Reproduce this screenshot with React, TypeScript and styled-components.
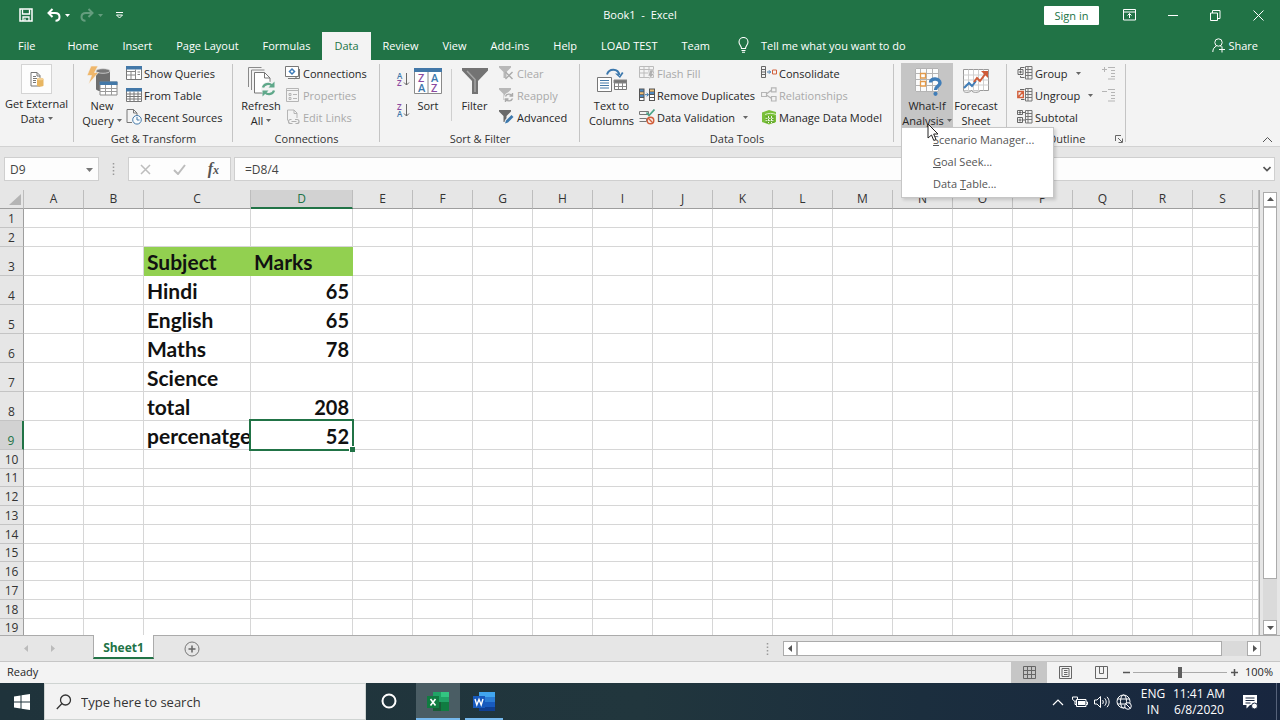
import React, { useState } from "react";
import styled, { createGlobalStyle, css } from "styled-components";

const GREEN = "#217346";
const UI_FONT = '"Open Sans", "Noto Sans", sans-serif';

const GlobalStyle = createGlobalStyle`
  * { box-sizing: border-box; }
  body { margin: 0; background: #e6e6e6; font-family: ${UI_FONT}; font-size: 11px; color: #262626; }
  button, input { font: inherit; color: inherit; }
  button { border: 0; padding: 0; background: none; white-space: nowrap; }
`;

const Window = styled.div`
  display: flex;
  flex-direction: column;
  height: 100vh;
  overflow: hidden;
`;

/* ---------- title bar ---------- */

const TitleBar = styled.header`
  display: grid;
  grid-template-columns: 1fr auto 1fr;
  align-items: center;
  flex: none;
  height: 30px;
  background: ${GREEN};
  color: #fff;
`;

const QuickAccess = styled.div`
  display: flex;
  align-items: center;
  padding-left: 19px;
`;

const QuickButton = styled.button<{ $gap?: number; $dim?: boolean }>`
  display: flex;
  margin-right: ${(p) => p.$gap ?? 0}px;
  opacity: ${(p) => (p.$dim ? 0.3 : 1)};
`;

const Title = styled.h1`
  margin: 0;
  padding-bottom: 2px;
  font-size: 11px;
  font-weight: 400;
  white-space: pre;
`;

const WindowControls = styled.div`
  display: flex;
  justify-content: flex-end;
  align-items: center;
  height: 28px;
`;

const SignIn = styled.button`
  width: 55px;
  height: 19px;
  margin-right: 9px;
  background: #fff;
  color: ${GREEN};
  border-radius: 1px;
`;

const ControlButton = styled.button`
  display: flex;
  align-items: center;
  justify-content: center;
  width: 43px;
  height: 28px;
`;

/* ---------- ribbon tabs ---------- */

const TabBar = styled.nav`
  display: flex;
  flex: none;
  height: 30px;
  padding: 2px 22px 0 6px;
  background: ${GREEN};
  color: #fff;
`;

const RibbonTab = styled.button<{ $active?: boolean; $wide?: boolean }>`
  padding: 0 12px 2px;
  margin-right: ${(p) => (p.$wide ? 8 : 0)}px;
  ${(p) => p.$active && css`
    background: #f3f3f3;
    color: ${GREEN};
  `}
`;

const TellMe = styled.button`
  display: flex;
  align-items: center;
  gap: 12px;
  margin-left: 16px;
  padding-bottom: 2px;
`;

const Share = styled.button`
  display: flex;
  align-items: center;
  gap: 2px;
  margin-left: auto;
  padding-bottom: 2px;
`;

/* ---------- ribbon ---------- */

const Ribbon = styled.section`
  display: flex;
  flex: none;
  height: 87px;
  background: #f3f3f3;
  border-bottom: 1px solid #d2d2d2;
`;

const GroupBox = styled.div<{ $width: number }>`
  position: relative;
  display: flex;
  flex-direction: column;
  flex: none;
  width: ${(p) => p.$width}px;
  padding-top: 3px;
  &::after {
    content: "";
    position: absolute;
    right: 0;
    top: 4px;
    bottom: 4px;
    width: 1px;
    background: #c4c4c4;
  }
`;

const GroupBody = styled.div<{ $indent?: number }>`
  display: flex;
  align-items: flex-start;
  height: 68px;
  padding-left: ${(p) => p.$indent ?? 6}px;
`;

const GroupLabel = styled.div`
  display: flex;
  align-items: center;
  justify-content: center;
  height: 15px;
  color: #333;
`;

const Launcher = styled.button`
  position: absolute;
  right: 3px;
  bottom: 3px;
  display: flex;
`;

const BigButton = styled.button<{ $width: number; $pressed?: boolean }>`
  display: flex;
  flex-direction: column;
  align-items: center;
  width: ${(p) => p.$width}px;
  line-height: 15px;
  text-align: center;
  ${(p) => p.$pressed && css`
    background: #c5c5c5;
  `}
`;

const BigIcon = styled.span`
  display: flex;
  align-items: center;
  justify-content: center;
  height: 35px;
`;

const BoxedIcon = styled.span`
  display: flex;
  align-items: center;
  justify-content: center;
  width: 31px;
  height: 30px;
  margin: 1px 0 2px;
  background: #fdfdfd;
  border: 1px solid #d4d4d4;
`;

const LabelLine = styled.span`
  display: flex;
  align-items: center;
  gap: 3px;
`;

const SmallColumn = styled.div<{ $width?: number; $gap?: number }>`
  display: flex;
  flex-direction: column;
  align-items: flex-start;
  width: ${(p) => (p.$width ? `${p.$width}px` : "auto")};
  margin-left: ${(p) => p.$gap ?? 2}px;
`;

const SmallButton = styled.button`
  display: flex;
  align-items: center;
  gap: 2px;
  height: 22px;
  padding-bottom: 2px;
  &:disabled { color: #a9a9a9; }
`;

const CaretSpace = styled.span`
  display: flex;
  margin-left: 6px;
`;

const SortColumn = styled.div`
  display: flex;
  flex-direction: column;
  gap: 10px;
  width: 23px;
  padding-top: 8px;
`;

const InnerDivider = styled.span`
  width: 1px;
  height: 52px;
  margin: 6px 0 0 2px;
  background: #cfcfcf;
`;

const MenuAnchor = styled.div`
  position: relative;
`;

const Menu = styled.div`
  position: absolute;
  z-index: 5;
  top: 64px;
  left: 0;
  width: 153px;
  padding-bottom: 3px;
  background: #fff;
  border: 1px solid #c6c6c6;
  box-shadow: 2px 2px 3px rgba(0, 0, 0, 0.15);
`;

const MenuItem = styled.button`
  display: block;
  width: 100%;
  height: 22px;
  padding-left: 31px;
  text-align: left;
  color: #555;
`;

const Pointer = styled.svg`
  position: absolute;
  z-index: 6;
  top: 60px;
  left: 26px;
  pointer-events: none;
`;

const CollapseButton = styled.button`
  display: flex;
  align-self: flex-end;
  margin: 0 7px 3px auto;
`;

/* ---------- formula bar ---------- */

const FormulaBar = styled.div`
  display: flex;
  flex: none;
  height: 43px;
  padding: 10px 5px 9px 4px;
  background: #e6e6e6;
`;

const fieldBox = css`
  display: flex;
  align-items: center;
  background: #fdfdfd;
  border: 1px solid #cfcfcf;
`;

const NameBox = styled.div`
  ${fieldBox}
  width: 95px;
  padding-right: 5px;
  input { width: 80px; flex: 1; border: 0; outline: 0; padding: 0 5px; background: none; font-size: 12px; color: #444; }
`;

const Grip = styled.span`
  display: flex;
  align-items: center;
  justify-content: center;
  width: 29px;
`;

const EditButtons = styled.div`
  ${fieldBox}
  justify-content: space-between;
  width: 103px;
  padding: 0 11px;
  margin-right: 3px;
  button { display: flex; }
`;

const FxLabel = styled.span`
  font-family: "Liberation Serif", serif;
  font-size: 16px;
  font-style: italic;
  font-weight: 700;
  line-height: 16px;
  color: #555;
  sub { font-size: 12px; line-height: 0; vertical-align: baseline; }
`;

const FormulaField = styled.div`
  ${fieldBox}
  flex: 1;
  padding-right: 3px;
  input { flex: 1; border: 0; outline: 0; padding: 0 10px; background: none; font-size: 12px; color: #444; }
`;

/* ---------- sheet ---------- */

const SheetArea = styled.main`
  display: flex;
  flex: 1;
  min-height: 0;
  background: #e6e6e6;
`;

const SheetView = styled.div`
  flex: 1;
  min-width: 0;
  overflow: hidden;
  border-right: 1px solid #ababab;
`;

const SheetTable = styled.table`
  width: 100%;
  table-layout: fixed;
  border-collapse: separate;
  border-spacing: 0;
`;

const ColumnHead = styled.th<{ $selected?: boolean }>`
  height: 19px;
  padding: 0;
  font-size: 12px;
  font-weight: 400;
  line-height: 16px;
  color: ${(p) => (p.$selected ? GREEN : "#333")};
  background: ${(p) => (p.$selected ? "#d2d2d2" : "#e6e6e6")};
  border-right: 1px solid #bdbdbd;
  border-bottom: ${(p) => (p.$selected ? `2px solid ${GREEN}` : "1px solid #9e9e9e")};
`;

const CornerCell = styled.td`
  padding: 0 2px 0 0;
  border-right: 1px solid #bdbdbd;
  border-bottom: 1px solid #9e9e9e;
  vertical-align: bottom;
  text-align: right;
  svg { display: block; margin: 0 0 3px auto; }
`;

const RowHead = styled.th<{ $height: number; $selected?: boolean }>`
  height: ${(p) => p.$height}px;
  padding: 0;
  font-size: 12px;
  font-weight: 400;
  line-height: 17px;
  vertical-align: bottom;
  text-align: center;
  color: ${(p) => (p.$selected ? GREEN : "#333")};
  background: ${(p) => (p.$selected ? "#d2d2d2" : "#e6e6e6")};
  border-right: ${(p) => (p.$selected ? `2px solid ${GREEN}` : "1px solid #9e9e9e")};
  border-bottom: 1px solid #c4c4c4;
`;

const Cell = styled.td<{ $fill?: boolean; $number?: boolean; $selected?: boolean }>`
  position: relative;
  padding: 1px 3px 0;
  overflow: ${(p) => (p.$selected ? "visible" : "hidden")};
  font-family: Lato, "Open Sans", sans-serif;
  font-size: ${(p) => (p.$number ? 20 : 21)}px;
  font-weight: 700;
  line-height: 16px;
  white-space: nowrap;
  color: #111;
  text-align: ${(p) => (p.$number ? "right" : "left")};
  background: ${(p) => (p.$fill ? "#92d050" : "#fff")};
  border-right: 1px solid ${(p) => (p.$fill ? "#92d050" : "#d6d6d6")};
  border-bottom: 1px solid ${(p) => (p.$fill ? "#92d050" : "#d6d6d6")};
`;

const SelectionFrame = styled.span`
  position: absolute;
  z-index: 2;
  inset: -2px;
  border: 2px solid ${GREEN};
  &::after {
    content: "";
    position: absolute;
    right: -3px;
    bottom: -3px;
    width: 5px;
    height: 5px;
    background: ${GREEN};
    box-shadow: -1px -1px 0 #fff;
  }
`;

const ScrollTrack = styled.div<{ $vertical?: boolean }>`
  display: flex;
  flex-direction: ${(p) => (p.$vertical ? "column" : "row")};
  ${(p) => p.$vertical
    ? css`width: 14px; margin: 2px 3px 0 3px;`
    : css`width: 478px; height: 15px; background: #dadada;`}
`;

const ScrollButton = styled.button`
  display: flex;
  align-items: center;
  justify-content: center;
  flex: none;
  width: 14px;
  height: 15px;
  background: #fff;
  border: 1px solid #ababab;
`;

const ScrollThumb = styled.div<{ $share: number }>`
  flex: 0 0 ${(p) => p.$share}%;
  background: #fff;
  border: 1px solid #ababab;
`;

const ScrollRest = styled.div`
  flex: 1;
  background: #dadada;
`;

/* ---------- sheet tabs and status ---------- */

const SheetTabs = styled.div`
  display: flex;
  flex: none;
  height: 27px;
  padding-right: 19px;
  background: #e6e6e6;
  border-top: 1px solid #ababab;
  border-bottom: 1px solid #c6c6c6;
`;

const TabArrows = styled.div`
  display: flex;
  align-items: center;
  gap: 19px;
  width: 93px;
  padding-left: 23px;
  button { display: flex; }
`;

const SheetTab = styled.button`
  width: 61px;
  height: 24px;
  margin-top: -1px;
  padding-top: 2px;
  background: #fff;
  border: 1px solid #ababab;
  border-top: 0;
  border-bottom: 2px solid ${GREEN};
  color: ${GREEN};
  font-size: 12px;
  font-weight: 700;
`;

const AddSheet = styled.button`
  display: flex;
  align-items: center;
  margin-left: 30px;
`;

const HorizontalScroll = styled.div`
  display: flex;
  align-items: center;
  gap: 14px;
  margin-left: auto;
`;

const StatusBar = styled.footer`
  display: flex;
  align-items: center;
  flex: none;
  height: 21px;
  padding: 0 7px;
  background: #f3f3f3;
`;

const StatusText = styled.span`
  padding-bottom: 2px;
`;

const StatusTools = styled.div`
  display: flex;
  align-items: center;
  height: 21px;
  margin-left: auto;
`;

const ViewButton = styled.button<{ $active?: boolean }>`
  display: flex;
  align-items: center;
  justify-content: center;
  width: 36px;
  height: 21px;
  background: ${(p) => (p.$active ? "#c6c6c6" : "none")};
`;

const ZoomStep = styled.button`
  width: 14px;
  display: flex;
  justify-content: center;
`;

const ZoomSlider = styled.input`
  appearance: none;
  width: 94px;
  height: 14px;
  margin: 0;
  background: linear-gradient(#aaa, #aaa) center / 100% 1px no-repeat;
  &::-webkit-slider-thumb { appearance: none; width: 4px; height: 11px; background: #5f5f5f; }
`;

const ZoomValue = styled.span`
  width: 32px;
  padding-bottom: 2px;
  text-align: right;
`;

/* ---------- taskbar ---------- */

const Taskbar = styled.div`
  display: flex;
  flex: none;
  height: 37px;
  color: #fff;
  background: linear-gradient(90deg, #1f333b 0%, #21363d 50%, #1b2e3e 72%, #18263f 100%);
`;

const StartButton = styled.button`
  display: flex;
  align-items: center;
  justify-content: center;
  width: 44px;
`;

const SearchBox = styled.label`
  display: flex;
  align-items: center;
  gap: 9px;
  width: 322px;
  padding-left: 11px;
  background: #f2f2f2;
  border: 1px solid #cfd4d2;
  input { flex: 1; min-width: 0; border: 0; outline: 0; padding: 0; background: none; font-size: 13px; }
  input::placeholder { color: #333; opacity: 1; }
`;

const TaskButton = styled.button<{ $running?: boolean; $active?: boolean }>`
  display: flex;
  align-items: center;
  justify-content: center;
  width: ${(p) => (p.$running && !p.$active ? 38 : 44)}px;
  margin-left: ${(p) => (p.$active || p.$running ? 5 : 1)}px;
  padding-top: ${(p) => (p.$running ? 2 : 0)}px;
  border-bottom: 2px solid ${(p) => (p.$running ? "#76b9ed" : "transparent")};
  background: ${(p) => (p.$active ? "#4a5d64" : "none")};
  background-clip: padding-box;
`;

const Tray = styled.div`
  display: flex;
  align-items: center;
  margin-left: auto;
  padding-right: 3px;
`;

const TrayButton = styled.button`
  display: flex;
  align-items: center;
  justify-content: center;
  width: 22px;
`;

const TrayText = styled.div<{ $width: number }>`
  width: ${(p) => p.$width}px;
  font-size: 12px;
  line-height: 16px;
  text-align: center;
`;

const Notifications = styled.button`
  display: flex;
  align-items: center;
  justify-content: center;
  width: 46px;
`;

const DesktopEdge = styled.span`
  width: 1px;
  height: 37px;
  margin-left: 3px;
  background: #56627a;
`;

/* ---------- icons ---------- */

type IconProps = { w?: number; h?: number; children: React.ReactNode };
const Icon = ({ w = 16, h = 16, children }: IconProps) => (
  <svg width={w} height={h} viewBox={`0 0 ${w} ${h}`} fill="none" aria-hidden="true">{children}</svg>
);

const Caret = ({ color = "#666" }: { color?: string }) => (
  <Icon w={5} h={3}><path d="M0 0h5L2.5 3z" fill={color} /></Icon>
);

const SaveIcon = () => (
  <Icon w={14} h={14}>
    <path d="M1 1h12v12H1z" stroke="#fff" strokeWidth="1.5" />
    <path d="M3.500 1.500V6h7V1.500M4 13V9h6v4M6 10.500v2" stroke="#fff" strokeWidth="1.300" />
  </Icon>
);
const UndoIcon = ({ flip }: { flip?: boolean }) => (
  <Icon w={14} h={14}>
    <g transform={flip ? "matrix(-1 0 0 1 14 0)" : undefined} stroke="#fff" strokeWidth="2">
      <path d="M5.500 1 1.500 5l4 4M2 5h6c3 0 4.500 1.500 4.500 4S11 12.800 8.500 12.800" />
    </g>
  </Icon>
);
const CustomizeIcon = () => (
  <Icon w={9} h={9}><path d="M1 1.500h7" stroke="#fff" /><path d="M1.500 4 4.500 7 7.500 4z" stroke="#fff" /></Icon>
);
const RibbonOptionsIcon = () => (
  <Icon w={13} h={12}>
    <path d="M.5.5h12v10.500H.5zM.5 3h12M6.500 9V4.500M4.500 6.500l2-2 2 2" stroke="#fff" />
  </Icon>
);
const MinimizeIcon = () => <Icon w={10} h={10}><path d="M0 5.500h10" stroke="#fff" /></Icon>;
const RestoreIcon = () => (
  <Icon w={11} h={11}><path d="M.5 3h7v7.500h-7zM2.500 3V.5h7.500v8H7.500" stroke="#fff" /></Icon>
);
const CloseIcon = () => <Icon w={11} h={11}><path d="m.5.5 10 10M10.500.5l-10 10" stroke="#fff" /></Icon>;
const BulbIcon = () => (
  <Icon w={11} h={16}>
    <path d="M3.500 11.500C3.500 9 1 8 1 5a4.500 4.500 0 0 1 9 0c0 3-2.500 4-2.500 6.500zM3.500 13.500h4M4 15.300h3" stroke="#fff" strokeWidth="1.100" />
  </Icon>
);
const PersonIcon = () => (
  <Icon w={14} h={15}>
    <circle cx="6.500" cy="4.500" r="3.700" stroke="#fff" />
    <path d="M.8 14c0-3 1.500-5 3.700-6M8.500 8l1 1M10 8.500v6M7 11.500h6" stroke="#fff" />
  </Icon>
);

const ExternalDataIcon = () => (
  <Icon w={14} h={15}>
    <path d="M1 .5h6l3 3V14H1z" fill="#fff" stroke="#777" />
    <path d="M7 .5v3.500h3M3 4.500h3M3 6.500h4M3 8.500h3M3 10.500h3" stroke="#777" />
    <path d="M7 7v6.500c0 1.500 6.500 1.500 6.500 0V7z" fill="#e8b662" />
    <ellipse cx="10.200" cy="7" rx="3.300" ry="1.300" fill="#f3cf92" />
  </Icon>
);
const NewQueryIcon = () => (
  <Icon w={32} h={32}>
    <path d="M10 6v18c0 3 14 3 14 0V6z" fill="#6e6e6e" />
    <ellipse cx="17" cy="6" rx="7" ry="2.300" fill="#777" stroke="#d8d8d8" strokeWidth=".8" />
    <path d="M5 1h7L8.500 7.500h4L2.500 19l3-8.500H1z" fill="#efb76b" stroke="#f3f3f3" strokeWidth=".6" />
    <path d="M14 17h17v13H14z" fill="#fff" stroke="#8a8a8a" />
    <path d="M13.500 16.500h18v3.500h-18z" fill="#4378a8" />
    <path d="M14 23.500h17M14 26.500h17M19.500 20V30M25.500 20V30" stroke="#9a9a9a" />
  </Icon>
);
const TableIcon = ({ panes }: { panes?: boolean }) => (
  <Icon w={16} h={14}>
    <path d="M.5.5h15v13H.5z" fill="#fff" stroke="#777" />
    <path d="M0 0h16v3.500H0z" fill="#4378a8" />
    {panes ? (
      <path d="M1 5.500h8M9.500 3.500V13M1 9h8M5 6v7M11.500 6h2.500M11.500 8.500h2.500" stroke="#888" />
    ) : (
      <path d="M1 6h14M1 8.500h14M1 11h14M4 3.500V13M8 3.500V13M12 3.500V13" stroke="#777" />
    )}
  </Icon>
);
const RecentIcon = () => (
  <Icon>
    <path d="M1 .5h6.500L11 4v2M1 .5v13h5M7.500.5V4H11" stroke="#777" />
    <circle cx="11" cy="10.800" r="4.300" fill="#f8fbfd" stroke="#4378a8" />
    <path d="M11 8v3h2.500" stroke="#4378a8" />
  </Icon>
);
const RefreshIcon = () => (
  <Icon w={30} h={32}>
    <path d="M2.500 22V2.500h13M5.500 25V5h13" stroke="#8a8a8a" />
    <path d="M8.500 7.500h10l5.500 5.500V28H8.500z" fill="#fff" stroke="#777" />
    <path d="M18.500 7.500V13H24" stroke="#777" />
    <circle cx="22.500" cy="24" r="7.500" fill="#f3f3f3" />
    <path d="M17 22.500c1-3.500 6-5 9-2M28 25.500c-1 3.500-6 5-9 2" stroke="#5fa88a" strokeWidth="2.300" />
    <path d="M28.500 16.500v6h-6zM16.500 31.500v-6h6z" fill="#5fa88a" />
  </Icon>
);
const ConnectionsIcon = () => (
  <Icon w={16} h={14}>
    <path d="M.5.500h13V10.500H.5z" fill="#fff" stroke="#777" />
    <path d="M3 12.500h11.500V3M9 13l4-3" stroke="#777" />
    <path d="m7 3 2.500 2.500L7 8 4.500 5.500z" stroke="#3c7ab8" strokeWidth="1.500" />
  </Icon>
);
const PropertiesIcon = () => (
  <Icon w={16} h={14}>
    <path d="M1.500.5h12v13h-12zM1.500 2.500h12M4 5.500h2v2H4zM4 9.500h2v2H4zM8 6.500h4M8 10.500h4" stroke="#b5b5b5" />
  </Icon>
);
const EditLinksIcon = () => (
  <Icon>
    <path d="M2.500 11.500V1h6.500l3 3v5M9 1v3.500h3" stroke="#b5b5b5" />
    <path d="M6.500 10.500h-1a2 2 0 0 0 0 4h2M10.500 14.500h1.500a2 2 0 0 0 0-4h-2M6.500 12.500h5" stroke="#b0b0b0" strokeWidth="1.200" />
  </Icon>
);

const A = "#3c78ad";
const Z = "#8a4aa0";
const Glyph = styled.text<{ $size: number }>`
  font: 600 ${(p) => p.$size}px "Open Sans", sans-serif;
`;
const SortOrderIcon = ({ top, bottom }: { top: string; bottom: string }) => (
  <Icon w={14} h={18}>
    <Glyph $size={8} x="1" y="8" fill={top === "A" ? A : Z}>{top}</Glyph>
    <Glyph $size={8} x="1" y="15" fill={bottom === "A" ? A : Z}>{bottom}</Glyph>
    <path d="M10.500 2v12M8 11.500l2.500 2.500 2.500-2.500" stroke="#666" />
  </Icon>
);
const SortIcon = () => (
  <Icon w={28} h={26}>
    <path d="M.5.5h27v25H.5z" fill="#fff" stroke="#8a8a8a" />
    <path d="M0 0h28v4H0z" fill="#4378a8" />
    <path d="M14 4v21" stroke="#8a8a8a" />
    <Glyph $size={11} x="4" y="14" fill={Z}>Z</Glyph>
    <Glyph $size={11} x="4" y="24" fill={A}>A</Glyph>
    <Glyph $size={11} x="17" y="14" fill={A}>A</Glyph>
    <Glyph $size={11} x="17" y="24" fill={Z}>Z</Glyph>
  </Icon>
);
const FilterIcon = () => (
  <Icon w={26} h={26}>
    <path d="M0 0h26v2.500L16 13v13h-6V13L0 2.500z" fill="#737373" />
    <path d="M5 3 13 11.500V24" stroke="#a5a5a5" strokeWidth="1.500" />
  </Icon>
);
const FilterSmall = ({ kind }: { kind: "clear" | "reapply" | "advanced" }) => (
  <Icon>
    <path d="M0 1h12v1.500L7.500 7v6H4.500V7L0 2.500z" fill={kind === "advanced" ? "#6a6a6a" : "#b8b8b8"} />
    {kind === "clear" && <path d="m6.500 7 7 7M13.500 7l-7 7" stroke="#aaa" strokeWidth="1.400" />}
    {kind === "reapply" && (
      <g stroke="#aaa" strokeWidth="1.400">
        <circle cx="10" cy="10.500" r="5" fill="#f3f3f3" stroke="none" />
        <path d="M6.500 9.500c1-3 5-3 6.500-1M13.500 11.500c-1 3-5 3-6.500 1M13.500 6v3h-3M6.500 15v-3h3" />
      </g>
    )}
    {kind === "advanced" && (
      <g>
        <path d="m5 15 1-4 6-6 3 3-6 6z" fill="#f3f3f3" />
        <path d="m6 14.500 1-3L12.500 6l2 2L9 13.500z" fill="#3c78ad" />
      </g>
    )}
  </Icon>
);
const TextColumnsIcon = () => (
  <Icon w={30} h={26}>
    <path d="M.5 9.500h14v14H.5z" fill="#fff" stroke="#777" />
    <path d="M3 12.500h9M3 15h9M3 17.500h9M3 20h9" stroke="#4378a8" />
    <path d="M17.500 12.500h12v9h-12z" fill="#fff" stroke="#777" />
    <path d="M17 12h13v3H17zM18 18.500h11M21.500 15v6M25.500 15v6" fill="#777" stroke="#888" />
    <path d="M10 6.500C12 0 21 0 22.500 7" stroke="#3c78ad" strokeWidth="2" />
    <path d="M18 5.500h3l1.500 2.500L25 4l1.500 1L23 10z" fill="#3c78ad" />
  </Icon>
);
const FlashFillIcon = () => (
  <Icon>
    <path d="M.5 1.500h14v11H.5zM.5 4.500h14M.5 8h9M5 1.500v11M10 1.500v6" stroke="#bbb" />
    <path d="M11 5h4l-2 3.500h2.500L9.500 15l1.500-4H9z" fill="#b0b0b0" stroke="#f3f3f3" strokeWidth=".5" />
  </Icon>
);
const RemoveDupIcon = () => (
  <Icon>
    <path d="M0 1.500h5.500v12.500H0zM10 1.500h6v12.500h-6z" fill="#555" />
    <path d="M1 2.500h3.500v2H1zM1 8h3.500v2H1zM11 5h4v2h-4z" fill="#4e8ac2" />
    <path d="M1 5.200h3.500v2H1zM11 2.500h4v2h-4z" fill="#efc078" />
    <path d="M1 11h3.500v2H1zM11 8h4v2h-4zM11 11h4v2h-4z" fill="#fff" />
    <path d="M6 7.700h3.500M7.700 6l1.800 1.700-1.800 1.700" stroke="#3c78ad" />
  </Icon>
);
const ValidationIcon = () => (
  <Icon>
    <path d="M.5 2.500h9v3h-9zM.5 9.500h7v3h-7" stroke="#777" />
    <path d="m7.500 3.500 2.500 3L15.500.5" stroke="#4aa587" strokeWidth="1.700" />
    <circle cx="11.500" cy="11.500" r="3.300" fill="#f7e6df" stroke="#d2603c" strokeWidth="1.400" />
    <path d="m9.300 9.300 4.400 4.400" stroke="#d2603c" strokeWidth="1.300" />
  </Icon>
);
const ConsolidateIcon = () => (
  <Icon>
    <path d="M.5 1.500h4v11h-4zM.5 4.500h4M.5 7h4M.5 9.500h4" stroke="#666" />
    <path d="M6 7h3.500M8 5.300 9.700 7 8 8.700" stroke="#3c78ad" />
    <path d="M11.500 5h4v4h-4z" stroke="#d2603c" />
  </Icon>
);
const RelationsIcon = () => (
  <Icon>
    <path d="M.5 5.500h5v4h-5zM10.500.800h4.500v4h-4.500zM10.500 9.500h4.500v4.500h-4.500zM5.500 7l5-4M5.500 8l5 3.500" stroke="#b5b5b5" strokeWidth="1.200" />
  </Icon>
);
const ModelIcon = () => (
  <Icon>
    <path d="M1 3.500 8 1l7 2v10l-7 2.500L1 13z" fill="#7abf3a" />
    <path d="M4 5.500C7 4 12 4 15 5.500" stroke="#d8efc4" />
    <path d="M4.500 7h9v7h-9z" fill="#62a826" />
    <path d="M4.500 9.300h9M4.500 11.700h9M7.500 7v7M10.500 7v7" stroke="#f1f9e9" strokeDasharray="2 1" />
  </Icon>
);
const WhatIfIcon = () => (
  <Icon w={31} h={32}>
    <path d="M3 3h24v24H3z" fill="#fbfbfb" />
    <path d="M3.500 3.500h23v23h-23zM8.500 3v24M14.500 3v24M20.500 3v24M3 8.500h24M3 14.500h24M3 20.500h24" stroke="#b4b4b4" />
    <path d="M8.500 8.500h5v4.500h-5zM8.500 16.500h5v4.500h-5z" fill="#fff" stroke="#e39a4a" strokeWidth="1.300" />
    <path d="M18.500 17.500c0-5 9.500-4.500 9.500.5 0 3.500-4.500 3-4.500 7" stroke="#3f7db8" strokeWidth="3.400" />
    <circle cx="23.500" cy="28.800" r="2.100" fill="#3f7db8" />
  </Icon>
);
const ForecastIcon = () => (
  <Icon w={28} h={28}>
    <path d="M1.500 2.500h25v21h-25z" fill="#fff" stroke="#999" />
    <path d="M6.500 2.500v21M11.500 2.500v21M16.500 2.500v21M21.500 2.500v21M1.500 8h25M1.500 13h25M1.500 18h25" stroke="#cfcfcf" />
    <path d="M1.500 23.500c0 2.500 6 2.500 8 0 1 2.500 7 2.500 9 0" fill="#f3f3f3" stroke="#999" />
    <path d="m2 21 5-5 3 3 4-5" stroke="#3f7db8" strokeWidth="2" />
    <path d="m12 15 3-4 3 3 6-8" stroke="#cf5b38" strokeWidth="2" />
    <path d="M19 4h7v7z" fill="#cf5b38" />
  </Icon>
);
const OutlineIcon = ({ kind }: { kind: "group" | "ungroup" | "subtotal" }) => (
  <Icon>
    <path d="M8.500 1.500h6.500v12.500H8.500zM8.500 4.500h6.500M8.500 7.500h6.500M8.500 10.500h6.500M11 1.500v12.500" stroke="#777" />
    {kind === "group" && <path d="M7.500 2.500H3.500v1.500M7.500 12.500H3.500V11M1 4.500h5v5H1zM2 7h3M3.500 5.500v3" stroke="#666" />}
    {kind === "ungroup" && (
      <>
        <path d="M7.500 2.500H3M7.500 12.500H4" stroke="#666" />
        <path d="M.8 4.500h5.500v6H.8zM1 10.300l5.500-6" stroke="#d2603c" strokeWidth="1.400" />
      </>
    )}
    {kind === "subtotal" && <path d="M.5 1.500h5v4h-5zM.5 8.500h5v5h-5zM1.500 3.500h3M3 1.500v4M1.500 11h3M3 9.500v3M6 3.500h2M6 11h2" stroke="#666" />}
  </Icon>
);
const DetailIcon = ({ plus }: { plus?: boolean }) => (
  <Icon w={14} h={14}>
    <path d="M0 3.500h5M6 1.500h7M9 4.500h4M9 7.500h4M9 10.500h4M6 13h7" stroke="#b5b5b5" />
    {plus && <path d="M2.500 1v5" stroke="#b5b5b5" />}
  </Icon>
);
const LauncherIcon = () => (
  <Icon w={8} h={8}><path d="M.5 6V.5H6M3 3l4 4M7.500 3.500v4h-4" stroke="#666" /></Icon>
);
const Triangle = ({ dir, color = "#555" }: { dir: "up" | "down" | "left" | "right"; color?: string }) => {
  const d = { up: "M0 5h7L3.500 1z", down: "M0 2h7L3.500 6z", left: "M5 0v7L1 3.500z", right: "M2 0v7l4-3.500z" }[dir];
  return <Icon w={7} h={7}><path d={d} fill={color} /></Icon>;
};
const GripIcon = () => (
  <Icon w={3} h={12}><path d="M1.500 0v12" stroke="#999" strokeWidth="1.500" strokeDasharray="1.500 2" /></Icon>
);

const ExcelIcon = () => (
  <Icon w={22} h={20}>
    <path d="M6 0h8v10H6z" fill="#21a366" /><path d="M14 0h8v5h-8z" fill="#33c481" />
    <path d="M14 5h8v5h-8z" fill="#21a366" /><path d="M6 10h8v9H6z" fill="#185c37" />
    <path d="M14 10h8v9h-8z" fill="#107c41" />
    <path d="M0 4h12v12H0z" fill="#107c41" />
    <path d="m3.500 7 5 6.500M8.500 7l-5 6.500" stroke="#fff" strokeWidth="1.600" />
  </Icon>
);
const WordIcon = () => (
  <Icon w={22} h={20}>
    <path d="M6 0h16v5H6z" fill="#41a5ee" /><path d="M6 5h16v5H6z" fill="#2b7cd3" />
    <path d="M6 10h16v5H6z" fill="#185abd" /><path d="M6 15h16v4H6z" fill="#103f91" />
    <path d="M0 4h12v12H0z" fill="#185abd" />
    <path d="m2 7 1.800 6L6 7.500 8.200 13 10 7" stroke="#fff" strokeWidth="1.400" />
  </Icon>
);

/* ---------- data ---------- */

const TABS = ["File", "Home", "Insert", "Page Layout", "Formulas", "Data", "Review", "View", "Add-ins", "Help", "LOAD TEST", "Team"];

const COLUMNS = [
  { name: "A", width: 60 }, { name: "B", width: 60 }, { name: "C", width: 107 }, { name: "D", width: 102 },
  ..."EFGHIJKLMNOPQRS".split("").map((name) => ({ name, width: 60 })),
];

const MARKS: Record<number, [string, string]> = {
  3: ["Subject", "Marks"], 4: ["Hindi", "65"], 5: ["English", "65"], 6: ["Maths", "78"],
  7: ["Science", ""], 8: ["total", "208"], 9: ["percenatge", "52"],
};

const rowHeight = (row: number) => (MARKS[row] ? 29 : row % 4 === 3 ? 18 : 19);
const ROWS = Array.from({ length: 19 }, (_, i) => i + 1);

type BigProps = { width: number; icon: React.ReactNode; lines: string[]; caret?: boolean; pressed?: boolean; boxed?: boolean };
const Big = ({ width, icon, lines, caret, pressed, boxed }: BigProps) => (
  <BigButton $width={width} $pressed={pressed}>
    {boxed ? <BoxedIcon>{icon}</BoxedIcon> : <BigIcon>{icon}</BigIcon>}
    {lines.map((line, i) => (
      <LabelLine key={line}>{line}{caret && i === lines.length - 1 && <Caret />}</LabelLine>
    ))}
  </BigButton>
);

type SmallProps = { icon: React.ReactNode; label: string; disabled?: boolean; caret?: boolean };
const Small = ({ icon, label, disabled, caret }: SmallProps) => (
  <SmallButton disabled={disabled}>
    {icon}{label}{caret && <CaretSpace><Caret /></CaretSpace>}
  </SmallButton>
);

export default function App() {
  const [zoom, setZoom] = useState(50);
  const [formula, setFormula] = useState("=D8/4");
  return (
    <Window>
      <GlobalStyle />
      <TitleBar>
        <QuickAccess>
          <QuickButton $gap={14} aria-label="Save"><SaveIcon /></QuickButton>
          <QuickButton $gap={4} aria-label="Undo"><UndoIcon /></QuickButton>
          <QuickButton $gap={10} aria-label="Undo list"><Caret color="#fff" /></QuickButton>
          <QuickButton $gap={4} $dim aria-label="Redo"><UndoIcon flip /></QuickButton>
          <QuickButton $gap={12} $dim aria-label="Redo list"><Caret color="#fff" /></QuickButton>
          <QuickButton aria-label="Customize"><CustomizeIcon /></QuickButton>
        </QuickAccess>
        <Title>Book1  -  Excel</Title>
        <WindowControls>
          <SignIn>Sign in</SignIn>
          <ControlButton aria-label="Ribbon display options"><RibbonOptionsIcon /></ControlButton>
          <ControlButton aria-label="Minimize"><MinimizeIcon /></ControlButton>
          <ControlButton aria-label="Restore"><RestoreIcon /></ControlButton>
          <ControlButton aria-label="Close"><CloseIcon /></ControlButton>
        </WindowControls>
      </TitleBar>

      <TabBar>
        {TABS.map((tab) => (
          <RibbonTab key={tab} $active={tab === "Data"} $wide={tab === "File"}>{tab}</RibbonTab>
        ))}
        <TellMe><BulbIcon />Tell me what you want to do</TellMe>
        <Share><PersonIcon />Share</Share>
      </TabBar>

      <Ribbon>
        <GroupBox $width={74}>
          <GroupBody $indent={0}>
            <Big width={73} boxed icon={<ExternalDataIcon />} lines={["Get External", "Data"]} caret />
          </GroupBody>
        </GroupBox>

        <GroupBox $width={159}>
          <GroupBody>
            <Big width={44} icon={<NewQueryIcon />} lines={["New", "Query"]} caret />
            <SmallColumn>
              <Small icon={<TableIcon panes />} label="Show Queries" />
              <Small icon={<TableIcon />} label="From Table" />
              <Small icon={<RecentIcon />} label="Recent Sources" />
            </SmallColumn>
          </GroupBody>
          <GroupLabel>Get &amp; Transform</GroupLabel>
        </GroupBox>

        <GroupBox $width={147}>
          <GroupBody>
            <Big width={44} icon={<RefreshIcon />} lines={["Refresh", "All"]} caret />
            <SmallColumn>
              <Small icon={<ConnectionsIcon />} label="Connections" />
              <Small icon={<PropertiesIcon />} label="Properties" disabled />
              <Small icon={<EditLinksIcon />} label="Edit Links" disabled />
            </SmallColumn>
          </GroupBody>
          <GroupLabel>Connections</GroupLabel>
        </GroupBox>

        <GroupBox $width={200}>
          <GroupBody $indent={11}>
            <SortColumn>
              <button aria-label="Sort A to Z"><SortOrderIcon top="A" bottom="Z" /></button>
              <button aria-label="Sort Z to A"><SortOrderIcon top="Z" bottom="A" /></button>
            </SortColumn>
            <Big width={28} icon={<SortIcon />} lines={["Sort"]} />
            <SmallColumn $gap={7}><InnerDivider /></SmallColumn>
            <Big width={45} icon={<FilterIcon />} lines={["Filter"]} />
            <SmallColumn>
              <Small icon={<FilterSmall kind="clear" />} label="Clear" disabled />
              <Small icon={<FilterSmall kind="reapply" />} label="Reapply" disabled />
              <Small icon={<FilterSmall kind="advanced" />} label="Advanced" />
            </SmallColumn>
          </GroupBody>
          <GroupLabel>Sort &amp; Filter</GroupLabel>
        </GroupBox>

        <GroupBox $width={314}>
          <GroupBody>
            <Big width={51} icon={<TextColumnsIcon />} lines={["Text to", "Columns"]} />
            <SmallColumn $width={120}>
              <Small icon={<FlashFillIcon />} label="Flash Fill" disabled />
              <Small icon={<RemoveDupIcon />} label="Remove Duplicates" />
              <Small icon={<ValidationIcon />} label="Data Validation" caret />
            </SmallColumn>
            <SmallColumn>
              <Small icon={<ConsolidateIcon />} label="Consolidate" />
              <Small icon={<RelationsIcon />} label="Relationships" disabled />
              <Small icon={<ModelIcon />} label="Manage Data Model" />
            </SmallColumn>
          </GroupBody>
          <GroupLabel>Data Tools</GroupLabel>
        </GroupBox>

        <GroupBox $width={113}>
          <GroupBody $indent={7}>
            <MenuAnchor>
              <Big width={52} pressed icon={<WhatIfIcon />} lines={["What-If", "Analysis"]} caret />
              <Menu>
                <MenuItem><u>S</u>cenario Manager...</MenuItem>
                <MenuItem><u>G</u>oal Seek...</MenuItem>
                <MenuItem>Data <u>T</u>able...</MenuItem>
              </Menu>
              <Pointer width="13" height="19" viewBox="0 0 13 19">
                <path d="M1 1v14l3.500-3 2.300 5.500 2.200-1L6.700 11H11z" fill="#fff" stroke="#222" />
              </Pointer>
            </MenuAnchor>
            <Big width={46} icon={<ForecastIcon />} lines={["Forecast", "Sheet"]} />
          </GroupBody>
          <GroupLabel>Forecast</GroupLabel>
        </GroupBox>

        <GroupBox $width={119}>
          <GroupBody $indent={8}>
            <SmallColumn $width={83}>
              <Small icon={<OutlineIcon kind="group" />} label="Group" caret />
              <Small icon={<OutlineIcon kind="ungroup" />} label="Ungroup" caret />
              <Small icon={<OutlineIcon kind="subtotal" />} label="Subtotal" />
            </SmallColumn>
            <SmallColumn>
              <SmallButton disabled aria-label="Show detail"><DetailIcon plus /></SmallButton>
              <SmallButton disabled aria-label="Hide detail"><DetailIcon /></SmallButton>
            </SmallColumn>
          </GroupBody>
          <GroupLabel>Outline</GroupLabel>
          <Launcher aria-label="Outline settings"><LauncherIcon /></Launcher>
        </GroupBox>
        <CollapseButton aria-label="Collapse the ribbon">
          <Icon w={11} h={7}><path d="m1 6 4.500-4.500L10 6" stroke="#555" /></Icon>
        </CollapseButton>
      </Ribbon>

      <FormulaBar>
        <NameBox>
          <input aria-label="Name box" defaultValue="D9" />
          <Triangle dir="down" color="#777" />
        </NameBox>
        <Grip><GripIcon /></Grip>
        <EditButtons>
          <button aria-label="Cancel"><Icon w={11} h={11}><path d="m1 1 9 9M10 1l-9 9" stroke="#bdbdbd" strokeWidth="1.500" /></Icon></button>
          <button aria-label="Enter"><Icon w={13} h={11}><path d="m1 6 4 4L12 1" stroke="#bdbdbd" strokeWidth="2" /></Icon></button>
          <button aria-label="Insert function"><FxLabel>f<sub>x</sub></FxLabel></button>
        </EditButtons>
        <FormulaField>
          <input aria-label="Formula" value={formula} onChange={(e) => setFormula(e.target.value)} />
          <Icon w={8} h={6}><path d="m.5 1 3.500 3.500L7.500 1" stroke="#555" strokeWidth="1.700" /></Icon>
        </FormulaField>
      </FormulaBar>

      <SheetArea>
        <SheetView>
          <SheetTable>
            <colgroup>
              <col width={24} />
              {COLUMNS.map((c) => <col key={c.name} width={c.width} />)}
              <col />
            </colgroup>
            <thead>
              <tr>
                <CornerCell><Icon w={12} h={11}><path d="M12 0v11H0z" fill="#b4b4b4" /></Icon></CornerCell>
                {COLUMNS.map((c) => <ColumnHead key={c.name} scope="col" $selected={c.name === "D"}>{c.name}</ColumnHead>)}
                <ColumnHead />
              </tr>
            </thead>
            <tbody>
              {ROWS.map((row) => (
                <tr key={row}>
                  <RowHead scope="row" $height={rowHeight(row)} $selected={row === 9}>{row}</RowHead>
                  {COLUMNS.map((c) => {
                    const value = c.name === "C" ? MARKS[row]?.[0] : c.name === "D" ? MARKS[row]?.[1] : undefined;
                    const selected = c.name === "D" && row === 9;
                    return (
                      <Cell
                        key={c.name}
                        $fill={row === 3 && value !== undefined}
                        $number={c.name === "D" && row > 3}
                        $selected={selected}
                      >
                        {value}
                        {selected && <SelectionFrame />}
                      </Cell>
                    );
                  })}
                  <Cell />
                </tr>
              ))}
            </tbody>
          </SheetTable>
        </SheetView>
        <ScrollTrack $vertical>
          <ScrollButton aria-label="Scroll up"><Triangle dir="up" /></ScrollButton>
          <ScrollThumb $share={84} />
          <ScrollRest />
          <ScrollButton aria-label="Scroll down"><Triangle dir="down" /></ScrollButton>
        </ScrollTrack>
      </SheetArea>

      <SheetTabs>
        <TabArrows>
          <button aria-label="Previous sheet"><Triangle dir="left" color="#bbb" /></button>
          <button aria-label="Next sheet"><Triangle dir="right" color="#bbb" /></button>
        </TabArrows>
        <SheetTab>Sheet1</SheetTab>
        <AddSheet aria-label="New sheet">
          <Icon><circle cx="8" cy="8" r="7" stroke="#777" /><path d="M8 4.500v7M4.500 8h7" stroke="#666" strokeWidth="1.500" /></Icon>
        </AddSheet>
        <HorizontalScroll>
          <GripIcon />
          <ScrollTrack>
            <ScrollButton aria-label="Scroll left"><Triangle dir="left" /></ScrollButton>
            <ScrollThumb $share={89} />
            <ScrollRest />
            <ScrollButton aria-label="Scroll right"><Triangle dir="right" /></ScrollButton>
          </ScrollTrack>
        </HorizontalScroll>
      </SheetTabs>

      <StatusBar>
        <StatusText>Ready</StatusText>
        <StatusTools>
          <ViewButton $active aria-label="Normal view">
            <Icon w={13} h={13}><path d="M.5.5h12v12H.5zM.5 4.500h12M.5 8.500h12M4.500.5v12M8.500.5v12" stroke="#666" /></Icon>
          </ViewButton>
          <ViewButton aria-label="Page layout view">
            <Icon w={13} h={13}><path d="M.5.5h12v12H.5zM3 2.500h7v8H3zM5 4.500h3.500M5 6.500h3.500M5 8.500h3.500" stroke="#666" /></Icon>
          </ViewButton>
          <ViewButton aria-label="Page break preview">
            <Icon w={13} h={13}><path d="M.5.5h12v12H.5zM4.500.5v7h4v-7" stroke="#666" /></Icon>
          </ViewButton>
          <ZoomStep aria-label="Zoom out" onClick={() => setZoom(zoom - 10)}><Icon w={7} h={7}><path d="M0 3.500h7" stroke="#555" strokeWidth="1.500" /></Icon></ZoomStep>
          <ZoomSlider type="range" aria-label="Zoom" value={zoom} onChange={(e) => setZoom(Number(e.target.value))} />
          <ZoomStep aria-label="Zoom in" onClick={() => setZoom(zoom + 10)}><Icon w={7} h={7}><path d="M0 3.500h7M3.500 0v7" stroke="#555" strokeWidth="1.500" /></Icon></ZoomStep>
          <ZoomValue>100%</ZoomValue>
        </StatusTools>
      </StatusBar>

      <Taskbar>
        <StartButton aria-label="Start">
          <Icon><path d="M0 2.500 6.500 1.500V7.500H0zM7.500 1.300 16 0v7.500H7.500zM0 8.500h6.500v6L0 13.500zM7.500 8.500H16V16l-8.500-1.300z" fill="#fff" /></Icon>
        </StartButton>
        <SearchBox>
          <Icon><circle cx="9.500" cy="6" r="5" stroke="#333" strokeWidth="1.300" /><path d="M6 9.500.8 15" stroke="#333" strokeWidth="1.300" /></Icon>
          <input aria-label="Search" placeholder="Type here to search" />
        </SearchBox>
        <TaskButton aria-label="Cortana">
          <Icon><circle cx="8" cy="8" r="6.500" stroke="#fff" strokeWidth="2" /></Icon>
        </TaskButton>
        <TaskButton $running $active aria-label="Excel"><ExcelIcon /></TaskButton>
        <TaskButton $running aria-label="Word"><WordIcon /></TaskButton>
        <Tray>
          <TrayButton aria-label="Hidden icons"><Icon w={12} h={8}><path d="m1 7 5-5 5 5" stroke="#fff" strokeWidth="1.200" /></Icon></TrayButton>
          <TrayButton aria-label="Battery">
            <Icon w={16} h={12}>
              <path d="M4.500 3.500h9.500v7H4.500zM14 6h1.500v2.500H14" stroke="#fff" /><path d="M6 5h7v4H6z" fill="#fff" />
              <path d="M.5 1h5v2.500L3.500 5h-1L.5 3.500zM3 5v3.500h1.500" stroke="#fff" />
            </Icon>
          </TrayButton>
          <TrayButton aria-label="Volume">
            <Icon w={16} h={14}>
              <path d="M.5 5H3l3.500-3.500v11L3 9H.5zM8.500 5c1 1 1 3 0 4M10.700 3.300c2 2 2 5.400 0 7.400M13 1.800c2.800 3 2.800 7.400 0 10.400" stroke="#fff" />
            </Icon>
          </TrayButton>
          <TrayButton aria-label="Network">
            <Icon>
              <circle cx="7.500" cy="7.500" r="6.500" stroke="#fff" /><ellipse cx="7.500" cy="7.500" rx="3" ry="6.500" stroke="#fff" />
              <path d="M1.500 5h12M1.500 10h12" stroke="#fff" />
              <circle cx="12" cy="12" r="3.300" fill="#18263f" stroke="#fff" /><path d="m9.700 9.700 4.600 4.600" stroke="#fff" />
            </Icon>
          </TrayButton>
          <TrayText $width={36}>ENG<br />IN</TrayText>
          <TrayText $width={56}>11:41 AM<br />6/8/2020</TrayText>
          <Notifications aria-label="Notifications">
            <Icon>
              <path d="M1 1h14v10h-7l-3.500 3.500V11H1z" fill="#fff" /><path d="M3.500 4h9M3.500 6.500h9M3.500 9h5" stroke="#18263f" />
              <circle cx="12.500" cy="12" r="3" fill="#fff" stroke="#18263f" />
            </Icon>
          </Notifications>
          <DesktopEdge />
        </Tray>
      </Taskbar>
    </Window>
  );
}
